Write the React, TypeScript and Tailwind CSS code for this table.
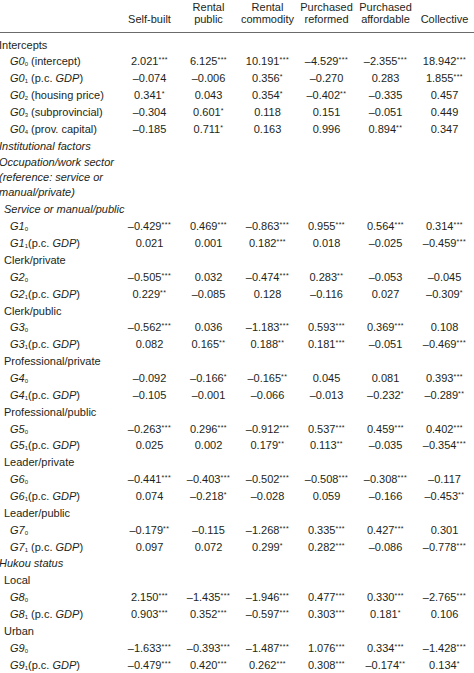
import React from 'react'

type Row =
  | { kind: 'head'; text: string; italic?: boolean; indent: 0 | 1 }
  | { kind: 'data'; g: string; sub: string; tail?: React.ReactNode; vals: string[] }

const GDP = (sp: boolean) => (
  <>
    {sp ? ' ' : ''}(p.c. <i>GDP</i>)
  </>
)

const rows: Row[] = [
  { kind: 'head', text: 'Intercepts', indent: 0 },
  { kind: 'data', g: 'G0', sub: '0', tail: ' (intercept)', vals: ['2.021***', '6.125***', '10.191***', '–4.529***', '–2.355***', '18.942***'] },
  { kind: 'data', g: 'G0', sub: '1', tail: GDP(true), vals: ['–0.074', '–0.006', '0.356*', '–0.270', '0.283', '1.855***'] },
  { kind: 'data', g: 'G0', sub: '2', tail: ' (housing price)', vals: ['0.341*', '0.043', '0.354*', '–0.402**', '–0.335', '0.457'] },
  { kind: 'data', g: 'G0', sub: '3', tail: ' (subprovincial)', vals: ['–0.304', '0.601*', '0.118', '0.151', '–0.051', '0.449'] },
  { kind: 'data', g: 'G0', sub: '4', tail: ' (prov. capital)', vals: ['–0.185', '0.711*', '0.163', '0.996', '0.894**', '0.347'] },
  { kind: 'head', text: 'Institutional factors', italic: true, indent: 0 },
  { kind: 'head', text: 'OCCUPATION', italic: true, indent: 0 },
  { kind: 'head', text: 'Service or manual/public', italic: true, indent: 1 },
  { kind: 'data', g: 'G1', sub: '0', vals: ['–0.429***', '0.469***', '–0.863***', '0.955***', '0.564***', '0.314***'] },
  { kind: 'data', g: 'G1', sub: '1', tail: GDP(false), vals: ['0.021', '0.001', '0.182***', '0.018', '–0.025', '–0.459***'] },
  { kind: 'head', text: 'Clerk/private', indent: 1 },
  { kind: 'data', g: 'G2', sub: '0', vals: ['–0.505***', '0.032', '–0.474***', '0.283**', '–0.053', '–0.045'] },
  { kind: 'data', g: 'G2', sub: '1', tail: GDP(false), vals: ['0.229**', '–0.085', '0.128', '–0.116', '0.027', '–0.309*'] },
  { kind: 'head', text: 'Clerk/public', indent: 1 },
  { kind: 'data', g: 'G3', sub: '0', vals: ['–0.562***', '0.036', '–1.183***', '0.593***', '0.369***', '0.108'] },
  { kind: 'data', g: 'G3', sub: '1', tail: GDP(false), vals: ['0.082', '0.165**', '0.188**', '0.181***', '–0.051', '–0.469***'] },
  { kind: 'head', text: 'Professional/private', indent: 1 },
  { kind: 'data', g: 'G4', sub: '0', vals: ['–0.092', '–0.166*', '–0.165**', '0.045', '0.081', '0.393***'] },
  { kind: 'data', g: 'G4', sub: '1', tail: GDP(false), vals: ['–0.105', '–0.001', '–0.066', '–0.013', '–0.232*', '–0.289**'] },
  { kind: 'head', text: 'Professional/public', indent: 1 },
  { kind: 'data', g: 'G5', sub: '0', vals: ['–0.263***', '0.296***', '–0.912***', '0.537***', '0.459***', '0.402***'] },
  { kind: 'data', g: 'G5', sub: '1', tail: GDP(false), vals: ['0.025', '0.002', '0.179**', '0.113**', '–0.035', '–0.354***'] },
  { kind: 'head', text: 'Leader/private', indent: 1 },
  { kind: 'data', g: 'G6', sub: '0', vals: ['–0.441***', '–0.403***', '–0.502***', '–0.508***', '–0.308***', '–0.117'] },
  { kind: 'data', g: 'G6', sub: '1', tail: GDP(false), vals: ['0.074', '–0.218*', '–0.028', '0.059', '–0.166', '–0.453**'] },
  { kind: 'head', text: 'Leader/public', indent: 1 },
  { kind: 'data', g: 'G7', sub: '0', vals: ['–0.179**', '–0.115', '–1.268***', '0.335***', '0.427***', '0.301'] },
  { kind: 'data', g: 'G7', sub: '1', tail: GDP(true), vals: ['0.097', '0.072', '0.299*', '0.282***', '–0.086', '–0.778***'] },
  { kind: 'head', text: 'Hukou status', italic: true, indent: 0 },
  { kind: 'head', text: 'Local', indent: 1 },
  { kind: 'data', g: 'G8', sub: '0', vals: ['2.150***', '–1.435***', '–1.946***', '0.477***', '0.330***', '–2.765***'] },
  { kind: 'data', g: 'G8', sub: '1', tail: GDP(true), vals: ['0.903***', '0.352***', '–0.597***', '0.303***', '0.181*', '0.106'] },
  { kind: 'head', text: 'Urban', indent: 1 },
  { kind: 'data', g: 'G9', sub: '0', vals: ['–1.633***', '–0.393***', '–1.487***', '1.076***', '0.334***', '–1.428***'] },
  { kind: 'data', g: 'G9', sub: '1', tail: GDP(false), vals: ['–0.479***', '0.420***', '0.262***', '0.308***', '–0.174**', '0.134*'] },
]

const headers: [string, string][] = [
  ['', 'Self-built'],
  ['Rental', 'public'],
  ['Rental', 'commodity'],
  ['Purchased', 'reformed'],
  ['Purchased', 'affordable'],
  ['', 'Collective'],
]

function Value({ v }: { v: string }) {
  const m = v.match(/^([^*]*)(\**)$/)
  const num = m ? m[1] : v
  const stars = m ? m[2] : ''
  return (
    <span className="whitespace-nowrap">
      {num}
      {stars && <span className="relative -top-[3px] text-[7px] tracking-[0.5px]">{stars}</span>}
    </span>
  )
}

const COLS = 'grid grid-cols-[120px_repeat(6,59px)]'

export default function App() {
  return (
    <div className="w-[474px] h-[673px] overflow-hidden bg-white text-[11px] text-[#231f20] font-['Liberation_Sans',Arial,sans-serif]">
      {/* column heads */}
      <div className={`${COLS} items-end pt-[1px] pb-[7px] leading-[12px] border-b border-[#6b6b6b]`}>
        <div />
        {headers.map(([a, b], i) => (
          <div key={i} className="text-center whitespace-nowrap">
            {a && <div>{a}</div>}
            <div>{b}</div>
          </div>
        ))}
      </div>

      <div className="pt-[3.5px]">
        {rows.map((r, i) => {
          if (r.kind === 'head') {
            if (r.text === 'OCCUPATION') {
              return (
                <div key={i} className="italic leading-[15px] py-[0.93px] whitespace-nowrap -ml-[1px]">
                  Occupation/work sector
                  <br />
                  (reference: service or
                  <br />
                  manual/private)
                </div>
              )
            }
            return (
              <div
                key={i}
                className={`h-[16.86px] leading-[16.86px] whitespace-nowrap ${r.italic ? 'italic' : ''} ${r.indent === 1 ? 'pl-[4px]' : '-ml-[1px]'}`}
              >
                {r.text}
              </div>
            )
          }
          return (
            <div key={i} className={`${COLS} h-[16.86px] leading-[16.86px]`}>
              <div className="pl-[10px] whitespace-nowrap">
                <i>{r.g}</i>
                <sub className="text-[6px] relative top-[1px]">{r.sub}</sub>
                {r.tail}
              </div>
              {r.vals.map((v, j) => (
                <div key={j} className="text-center">
                  <Value v={v} />
                </div>
              ))}
            </div>
          )
        })}
      </div>
    </div>
  )
}
